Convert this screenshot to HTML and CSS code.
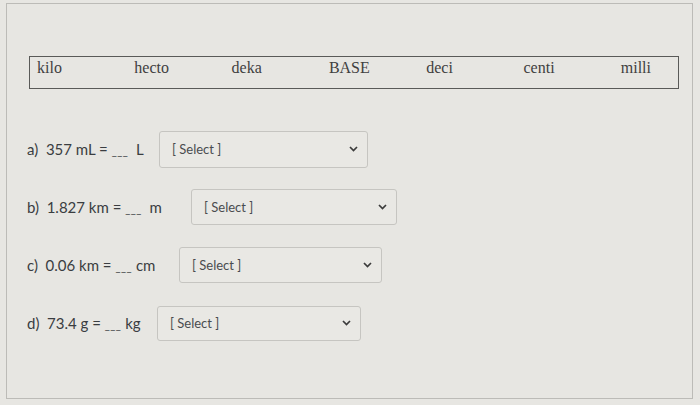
FILE: index.html
```html
<!DOCTYPE html>
<html lang="en">
<head>
<meta charset="utf-8">
<title>Metric conversions</title>
<link rel="stylesheet" href="styles.css">
</head>
<body>
<div class="frame">
  <div class="ladder">
    <span>kilo</span><span>hecto</span><span>deka</span><span>BASE</span><span>deci</span><span>centi</span><span>milli</span>
  </div>
  <div class="questions">
    <div class="q q-a">
      <span class="label">a)&nbsp; 357 mL = <span class="blank">___</span>&nbsp; L</span>
      <div class="select"><span>[ Select ]</span><svg class="chev" width="9" height="6" viewBox="0 0 9 6"><path d="M1 1 L4.5 4.5 L8 1" fill="none" stroke="#3b3b3b" stroke-width="1.7"/></svg></div>
    </div>
    <div class="q q-b">
      <span class="label">b)&nbsp; 1.827 km = <span class="blank">___</span>&nbsp; m</span>
      <div class="select"><span>[ Select ]</span><svg class="chev" width="9" height="6" viewBox="0 0 9 6"><path d="M1 1 L4.5 4.5 L8 1" fill="none" stroke="#3b3b3b" stroke-width="1.7"/></svg></div>
    </div>
    <div class="q q-c">
      <span class="label">c)&nbsp; 0.06 km = <span class="blank">___</span> cm</span>
      <div class="select"><span>[ Select ]</span><svg class="chev" width="9" height="6" viewBox="0 0 9 6"><path d="M1 1 L4.5 4.5 L8 1" fill="none" stroke="#3b3b3b" stroke-width="1.7"/></svg></div>
    </div>
    <div class="q q-d">
      <span class="label">d)&nbsp; 73.4 g = <span class="blank">___</span> kg</span>
      <div class="select"><span>[ Select ]</span><svg class="chev" width="9" height="6" viewBox="0 0 9 6"><path d="M1 1 L4.5 4.5 L8 1" fill="none" stroke="#3b3b3b" stroke-width="1.7"/></svg></div>
    </div>
  </div>
</div>
</body>
</html>
```
FILE: styles.css
```css
html, body {
  margin: 0;
  padding: 0;
  background: #e7e6e2;
}
body {
  width: 700px;
  height: 405px;
  overflow: hidden;
}
.frame {
  box-sizing: border-box;
  margin: 3px 7px 0 6px;
  height: 396px;
  border: 1px solid #bcbbb7;
  padding-top: 52px;
}
.ladder {
  box-sizing: border-box;
  margin-left: 22px;
  width: 650px;
  height: 33px;
  border: 1.5px solid #5a5a58;
  display: grid;
  grid-template-columns: repeat(6, 97.3px) 1fr;
  padding: 2px 0 0 7px;
  font-family: "Liberation Serif", "Times New Roman", serif;
  font-size: 16px;
  line-height: 18px;
  color: #3f3f3f;
}
.questions {
  display: flex;
  flex-direction: column;
  gap: 22px;
  margin-top: 42px;
  margin-left: 20px;
  font-family: Lato, "Noto Sans", sans-serif;
  font-size: 15px;
  color: #3a3d41;
}
.q {
  display: flex;
  align-items: center;
  height: 36px;
}
.label {
  white-space: nowrap;
  flex: none;
}
.q-a .label { width: 132px; }
.q-b .label { width: 164px; }
.q-c .label { width: 152px; }
.q-d .label { width: 130px; }
.blank {
  font-size: 11px;
  letter-spacing: 0.5px;
}
.select {
  box-sizing: border-box;
  width: 206px;
  height: 36px;
  border: 1px solid #c6c5c1;
  border-radius: 3px;
  background: #e9e8e4;
  display: flex;
  align-items: center;
  justify-content: space-between;
  padding: 0 9px 0 12px;
  font-size: 13px;
  color: #4a4c4f;
}
.q-a .select { width: 209px; height: 37px; }
.q-c .select { width: 203px; }
.q-d .select { width: 204px; height: 35px; }
.chev {
  display: block;
}
```
